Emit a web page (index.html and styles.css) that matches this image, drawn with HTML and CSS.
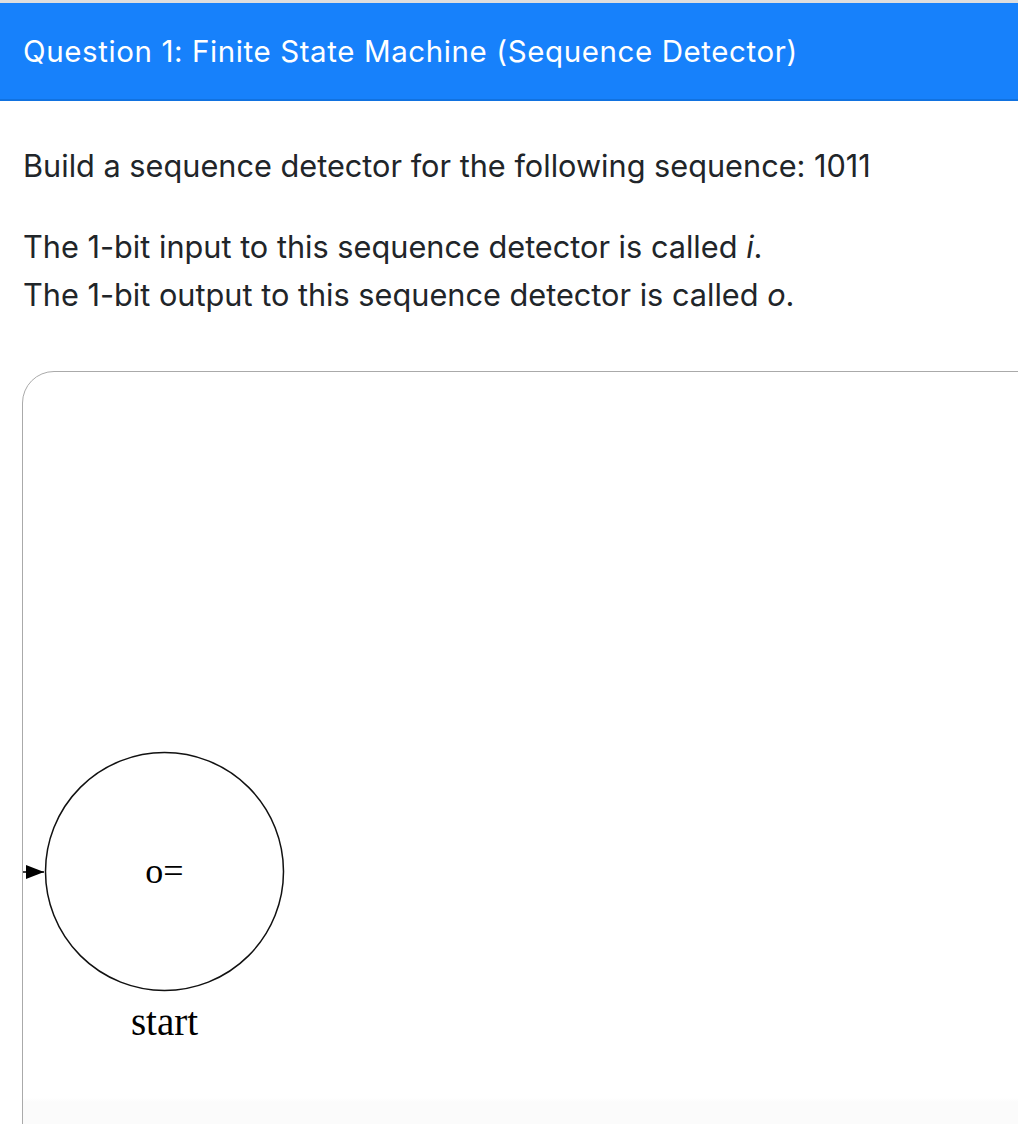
FILE: index.html
```html
<!DOCTYPE html>
<html lang="en">

<head>
    <meta charset="UTF-8" />
    <title>Question 1</title>
    <link rel="stylesheet" href="styles.css">
</head>

<body>
    <div class="question-card">
        <div class="card-header">Question 1: Finite State Machine (Sequence Detector)</div>

        <div class="card-body">
            <p class="prompt">Build a sequence detector for the following sequence: 1011</p>
            <p class="prompt">
                The 1-bit input to this sequence detector is called <em>i</em>.<br>
                The 1-bit output to this sequence detector is called <em>o</em>.
            </p>

            <div class="fsm-canvas">
                <svg class="fsm-svg" width="1200" height="800" viewBox="0 0 1200 800">
                    <defs>
                        <marker id="arrow" markerWidth="18" markerHeight="14" refX="18" refY="7" orient="auto"
                            markerUnits="userSpaceOnUse">
                            <path d="M0,0 L18,7 L0,14 Z" fill="#000" />
                        </marker>
                    </defs>
                    <line x1="-2" y1="500" x2="21" y2="500" stroke="#000" stroke-width="1.5" marker-end="url(#arrow)" />
                    <circle cx="141.5" cy="499.5" r="119" fill="none" stroke="#111" stroke-width="1.5" />
                    <text x="141.5" y="511" class="state-label">o=</text>
                    <text x="141.5" y="663" class="state-name">start</text>
                </svg>
            </div>
        </div>
    </div>
</body>

</html>
```

FILE: styles.css
```css
* {
    box-sizing: border-box;
}

body {
    margin: 0;
    font-family: Inter, "Liberation Sans", Arial, sans-serif;
    color: #212529;
    background: #fff;
    overflow: hidden;
    height: 1124px;
}

.question-card {
    border-top: 3px solid #dedede;
}

.card-header {
    background: #1781fb;
    color: #fff;
    font-size: 29.5px;
    letter-spacing: 0.6px;
    height: 98px;
    padding: 0 23px;
    display: flex;
    align-items: center;
    border-bottom: 2px solid #1172e0;
}

.card-body {
    padding: 41px 0 0 23px;
}

.prompt {
    font-size: 30.7px;
    line-height: 48px;
    margin: 0 0 33px;
}

.fsm-canvas {
    margin-top: 52px;
    margin-left: -1px;
    width: 1200px;
    height: 800px;
    border: 1.5px solid #aaa;
    border-radius: 32px;
    overflow: hidden;
    background: linear-gradient(to bottom, #fff 0, #fff 726px, #fbfbfb 730px);
}

.fsm-svg {
    display: block;
    overflow: visible;
}

.state-label {
    font-family: "Liberation Serif", "Times New Roman", serif;
    font-size: 36px;
    text-anchor: middle;
}

.state-name {
    font-family: "Liberation Serif", "Times New Roman", serif;
    font-size: 39px;
    text-anchor: middle;
}
```
